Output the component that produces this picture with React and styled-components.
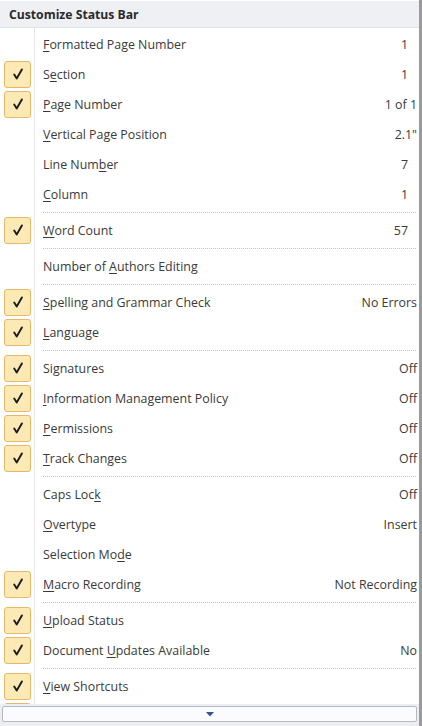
import React from "react";
import styled, { createGlobalStyle } from "styled-components";

const Global = createGlobalStyle`
  html, body { margin: 0; padding: 0; background: #ffffff; }
  body { font-family: "Open Sans", "Noto Sans", sans-serif; }
`;

const Menu = styled.div`
  width: 422px;
  height: 726px;
  box-sizing: border-box;
  border-right: 3px solid #9a9a9a;
  display: flex;
  flex-direction: column;
  background: #ffffff;
  overflow: hidden;
`;

const Header = styled.div`
  height: 28px;
  flex: none;
  box-sizing: border-box;
  border-top: 1px solid #ffffff;
  border-bottom: 1px solid #dfe2e7;
  background: #eef0f4;
  display: flex;
  align-items: center;
  padding-left: 9px;
  font: 700 12.2px "Open Sans", sans-serif;
  color: #2a2a2a;
`;

const Body = styled.div`
  flex: 1;
  display: flex;
  flex-direction: column;
  overflow: hidden;
  padding-top: 1px;
  background: linear-gradient(to right, #ffffff 0 34px, #e6e6e6 34px 35px, #ffffff 35px);
`;

const Row = styled.div`
  height: 30px;
  flex: none;
  display: grid;
  grid-template-columns: 35px 1fr auto;
  align-items: center;
  font: 400 12.4px "Open Sans", sans-serif;
  color: #3a3a3a;
`;

const Gutter = styled.div`
  display: flex;
  justify-content: flex-start;
  padding-left: 4px;
`;

const Check = styled.div`
  width: 25px;
  height: 25px;
  border: 1px solid #e8b86a;
  border-radius: 3px;
  background: #fde9b4;
  display: flex;
  align-items: center;
  justify-content: center;
`;

const Label = styled.span`
  padding-left: 8px;
  white-space: nowrap;
  u { text-decoration: underline; text-underline-offset: 2px; }
`;

const Value = styled.span`
  padding-right: ${(p) => p.$pad}px;
  white-space: nowrap;
`;

const Sep = styled.div`
  height: 6px;
  flex: none;
  display: flex;
  align-items: center;
  padding-left: 43px;
  padding-right: 3px;
  &::after {
    content: "";
    flex: 1;
    border-top: 1px dotted #c4c4c4;
  }
`;

const Footer = styled.div`
  flex: none;
  height: 22px;
  padding: 2px 2px 4px 2px;
  box-sizing: border-box;
  background: #eceef1;
  display: flex;
`;

const ScrollBtn = styled.div`
  flex: 1;
  border: 1px solid #b6b9bf;
  border-radius: 2px;
  background: #fbfbfd;
  display: flex;
  align-items: center;
  justify-content: center;
`;

const CheckIcon = () => (
  <svg width="14" height="14" viewBox="0 0 14 14">
    <path d="M3.2 7.6 L5.7 11.4 L10.9 2.4" fill="none" stroke="#1a1a1a" strokeWidth="1.9" strokeLinecap="round" strokeLinejoin="round" />
  </svg>
);

const Arrow = () => (
  <svg width="8" height="5" viewBox="0 0 8 5">
    <path d="M0 0 H8 L4 4.5 Z" fill="#2f5597" />
  </svg>
);

const lbl = (text, key) => {
  const i = key == null ? -1 : key;
  if (i < 0 || !text) return text || "";
  return (
    <>
      {text.slice(0, i)}
      <u>{text[i]}</u>
      {text.slice(i + 1)}
    </>
  );
};

const items = [
  { t: "Formatted Page Number", k: 0, v: "1", pad: 11 },
  { t: "Section", k: 1, v: "1", pad: 11, c: true },
  { t: "Page Number", k: 0, v: "1 of 1", pad: 2, c: true },
  { t: "Vertical Page Position", k: 0, v: "2.1\"", pad: 2 },
  { t: "Line Number", k: 8, v: "7", pad: 11 },
  { t: "Column", k: 0, v: "1", pad: 11 },
  "sep",
  { t: "Word Count", k: 0, v: "57", pad: 11, c: true },
  "sep",
  { t: "Number of Authors Editing", k: 10 },
  "sep",
  { t: "Spelling and Grammar Check", k: 0, v: "No Errors", pad: 2, c: true },
  { t: "Language", k: 0, c: true },
  "sep",
  { t: "Signatures", k: 2, v: "Off", pad: 2, c: true },
  { t: "Information Management Policy", k: 0, v: "Off", pad: 2, c: true },
  { t: "Permissions", k: 0, v: "Off", pad: 2, c: true },
  { t: "Track Changes", k: 0, v: "Off", pad: 2, c: true },
  "sep",
  { t: "Caps Lock", k: 8, v: "Off", pad: 2 },
  { t: "Overtype", k: 0, v: "Insert", pad: 2 },
  { t: "Selection Mode", k: 12 },
  { t: "Macro Recording", k: 0, v: "Not Recording", pad: 2, c: true },
  "sep",
  { t: "Upload Status", k: 0, c: true },
  { t: "Document Updates Available", k: 9, v: "No", pad: 2, c: true },
  "sep",
  { t: "View Shortcuts", k: 0, c: true },
  { t: "", c: true },
];

export default function App() {
  return (
    <>
      <Global />
      <Menu>
        <Header>Customize Status Bar</Header>
        <Body>
          {items.map((it, i) =>
            it === "sep" ? (
              <Sep key={i} />
            ) : (
              <Row key={i}>
                <Gutter>{it.c ? <Check><CheckIcon /></Check> : null}</Gutter>
                <Label>{lbl(it.t, it.k)}</Label>
                <Value $pad={it.pad || 0}>{it.v || ""}</Value>
              </Row>
            )
          )}
        </Body>
        <Footer>
          <ScrollBtn>
            <Arrow />
          </ScrollBtn>
        </Footer>
      </Menu>
    </>
  );
}
